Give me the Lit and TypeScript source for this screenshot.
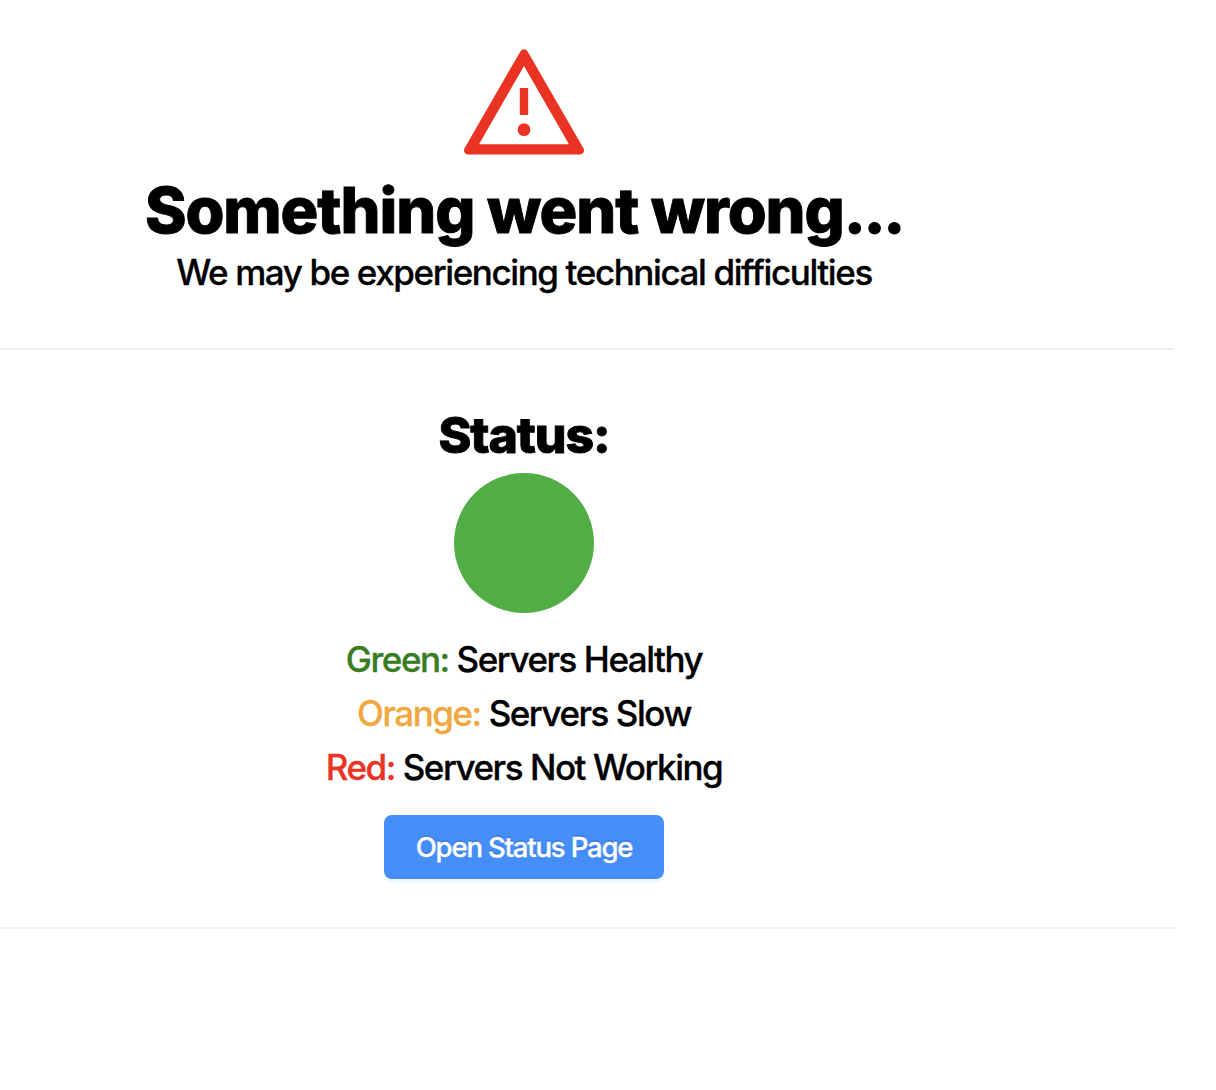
import { css, html, LitElement } from "lit";
import { customElement, property } from "lit/decorators.js";

type StatusLevel = "green" | "orange" | "red";

interface LegendEntry {
	level: StatusLevel;
	label: string;
	text: string;
}

const LEGEND: LegendEntry[] = [
	{ level: "green", label: "Green:", text: "Servers Healthy" },
	{ level: "orange", label: "Orange:", text: "Servers Slow" },
	{ level: "red", label: "Red:", text: "Servers Not Working" },
];

@customElement("warning-icon")
export class WarningIcon extends LitElement {
	static override styles = css`
		:host {
			display: block;
			width: 120px;
			height: 106px;
			color: #ea3323;
		}

		svg {
			display: block;
		}
	`;

	override render() {
		return html`
			<svg width="120" height="106" viewBox="0 0 120 106" fill="currentColor">
				<path
					fill-rule="evenodd"
					d="M56.36 2.4A4.2 4.2 0 0 1 63.64 2.4L119.44 99.2A4.2 4.2 0 0 1 115.8 105.5H4.2A4.2 4.2 0 0 1 .56 99.2ZM60 17L15 95.3H105Z"
				/>
				<rect x="55.8" y="39" width="8.4" height="27" rx="1" />
				<circle cx="60" cy="80.7" r="6.4" />
			</svg>
		`;
	}
}

@customElement("status-light")
export class StatusLight extends LitElement {
	@property({ reflect: true })
	level: StatusLevel = "green";

	static override styles = css`
		:host {
			display: block;
			width: 140px;
			height: 140px;
			border-radius: 50%;
			background: #52ad47;
		}

		:host([level="orange"]) {
			background: #f0a73c;
		}

		:host([level="red"]) {
			background: #ea3323;
		}
	`;

	override render() {
		return html``;
	}
}

@customElement("app-root")
export class AppRoot extends LitElement {
	static override styles = css`
		:host {
			display: block;
			min-height: 1090px;
			background: #fff;
			color: #000;
			font-family: Inter, "Liberation Sans", sans-serif;
			white-space: nowrap;
		}

		section {
			display: flex;
			flex-direction: column;
			align-items: center;
			box-sizing: border-box;
			width: 1174px;
			padding-right: 126px;
			padding-bottom: 48px;
			border-bottom: 2px solid #efefef;
		}

		.hero {
			padding-top: 49px;
		}

		.status {
			padding-top: 55px;
		}

		h1,
		h2,
		p {
			margin: 0;
		}

		h1,
		h2 {
			font-weight: 800;
			-webkit-text-stroke: 0.9px currentColor;
		}

		h1 {
			margin-top: 19px;
			font-size: 63px;
			line-height: 72px;
			letter-spacing: -1.1px;
		}

		.dots {
			letter-spacing: -2.4px;
		}

		h2 {
			font-size: 50px;
			line-height: 60px;
			letter-spacing: -1.1px;
		}

		p {
			font-size: 35px;
			font-weight: 500;
			line-height: 54px;
			letter-spacing: -1.47px;
			-webkit-text-stroke: 0.3px currentColor;
		}

		.lead {
			padding-bottom: 2px;
			line-height: 52px;
			letter-spacing: -1.4px;
		}

		status-light {
			margin: 8px 0 19px;
		}

		.green {
			color: #397d22;
		}

		.orange {
			color: #f0a940;
		}

		.red {
			color: #ea3325;
		}

		button {
			width: 280px;
			height: 64px;
			margin-top: 21px;
			padding: 0;
			border: 0;
			border-radius: 8px;
			background: #458ef7;
			box-shadow: 0 4px 0 rgba(69, 142, 247, 0.08);
			color: #fff;
			font: 500 27.5px/64px Inter, "Liberation Sans", sans-serif;
			letter-spacing: -1.17px;
			text-shadow: 0 -2px 0 rgba(0, 0, 0, 0.12);
			-webkit-text-stroke: 0.3px currentColor;
		}
	`;

	override render() {
		return html`
			<section class="hero">
				<warning-icon></warning-icon>
				<h1>Something went wrong<span class="dots">...</span></h1>
				<p class="lead">We may be experiencing technical difficulties</p>
			</section>
			<section class="status">
				<h2>Status:</h2>
				<status-light level="green"></status-light>
				${LEGEND.map(
					(e) =>
						html`<p><span class=${e.level}>${e.label}</span> ${e.text}</p>`,
				)}
				<button type="button">Open Status Page</button>
			</section>
		`;
	}
}
